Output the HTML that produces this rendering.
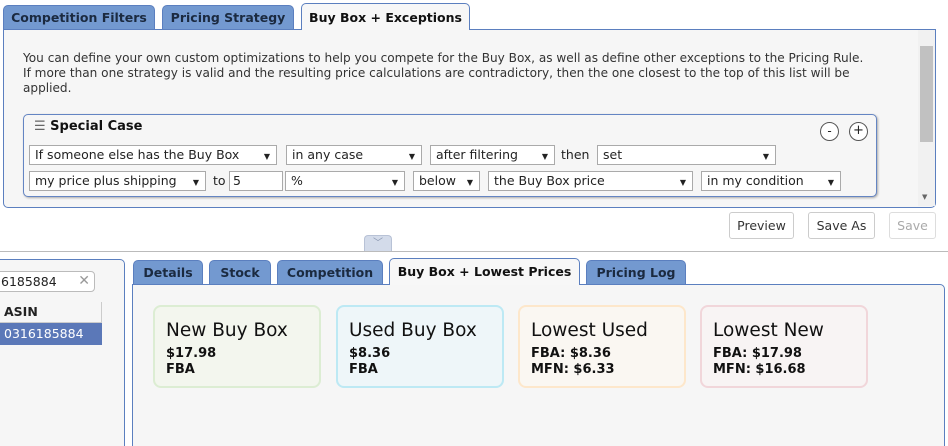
<!DOCTYPE html>
<html style="overflow:hidden;height:446px"><head><style>
*{box-sizing:border-box;margin:0;padding:0}
body{width:948px;height:446px;overflow:hidden;background:#fff;font-family:"DejaVu Sans","Liberation Sans",sans-serif;font-size:12px;color:#222;position:relative}
.a{position:absolute}
.tab{position:absolute;background:#7399d0;border:1px solid #5b7fbf;border-bottom:none;border-radius:5px 5px 0 0;font-weight:bold;font-size:12.5px;color:#1b2a40;text-align:center}
.tab.act{background:#f7f7f7;color:#111}
.sel{position:absolute;height:20px;border:1px solid #aaa;background:#fff;font-size:12.5px;padding:1px 5px;line-height:16px;color:#222}
.sel:after{content:"▼";position:absolute;right:6px;top:3px;font-size:8px}
.sel.n:after{content:""}
.btn{position:absolute;height:27px;border:1px solid #ccc;border-radius:3px;background:#fff;font-size:12.5px;text-align:center;line-height:25px;color:#333}
.card{position:absolute;top:305px;width:168px;height:83px;border:2px solid;border-radius:8px;padding:11px 11px}
.card .t{font-size:18.5px;color:#111;line-height:26px}
.card .v{font-weight:bold;font-size:13px;line-height:16px;color:#111;margin-top:2px}
</style></head><body>
<div class="tab" style="left:3px;top:5px;width:152px;height:24px;line-height:24px">Competition Filters</div>
<div class="tab" style="left:162px;top:5px;width:132px;height:24px;line-height:24px">Pricing Strategy</div>
<div class="a" style="left:3px;top:29px;width:933px;height:179px;border:1px solid #5b7fbf;border-radius:0 0 5px 5px;background:#f6f6f6"></div>
<div class="tab act" style="left:301px;top:3px;width:169px;height:27px;line-height:27px;z-index:2">Buy Box + Exceptions</div>
<div class="a" style="left:918px;top:30px;width:17px;height:176px;background:#f1f1f1"></div>
<div class="a" style="left:920px;top:46px;width:13px;height:96px;background:#c1c1c1"></div>
<div class="a" style="left:922px;top:193px;font-size:7px;color:#666">▼</div>
<div class="a" style="left:23px;top:51px;width:890px;line-height:15px;color:#333;font-size:12.1px">You can define your own custom optimizations to help you compete for the Buy Box, as well as define other exceptions to the Pricing Rule.<br>If more than one strategy is valid and the resulting price calculations are contradictory, then the one closest to the top of this list will be<br>applied.</div>
<div class="a" style="left:23px;top:114px;width:854px;height:83px;border:1px solid #6485c3;border-radius:5px;box-shadow:1px 1px 2px #aaa;background:#f6f6f6"></div>
<div class="a" style="left:34px;top:119px;font-size:13px;font-weight:bold;color:#111"><span style="font-weight:normal;color:#666">☰</span> Special Case</div>
<div class="a" style="left:820px;top:122px;width:19px;height:19px;border:1px solid #555;border-radius:50%;text-align:center;line-height:16px;font-size:12px;background:#fff">-</div>
<div class="a" style="left:849px;top:122px;width:19px;height:19px;border:1px solid #555;border-radius:50%;text-align:center;line-height:16px;font-size:13px;background:#fff">+</div>
<div class="sel" style="left:29px;top:145px;width:248px">If someone else has the Buy Box</div>
<div class="sel" style="left:286px;top:145px;width:136px">in any case</div>
<div class="sel" style="left:430px;top:145px;width:125px">after filtering</div>
<div class="a" style="left:561px;top:147px;font-size:12.5px">then</div>
<div class="sel" style="left:597px;top:145px;width:179px">set</div>
<div class="sel" style="left:29px;top:171px;width:177px">my price plus shipping</div>
<div class="a" style="left:213px;top:173px;font-size:12.5px">to</div>
<div class="sel n" style="left:229px;top:171px;width:54px;padding-left:3px">5</div>
<div class="sel" style="left:285px;top:171px;width:120px">%</div>
<div class="sel" style="left:413px;top:171px;width:67px">below</div>
<div class="sel" style="left:488px;top:171px;width:205px">the Buy Box price</div>
<div class="sel" style="left:701px;top:171px;width:140px">in my condition</div>
<div class="btn" style="left:729px;top:212px;width:65px">Preview</div>
<div class="btn" style="left:808px;top:212px;width:67px">Save As</div>
<div class="btn" style="left:889px;top:212px;width:47px;color:#aaa;border-color:#ddd">Save</div>
<div class="a" style="left:0;top:251px;width:948px;height:1px;background:#bbb"></div>
<div class="a" style="left:364px;top:235px;width:28px;height:16px;background:#d3dbea;border:1px solid #b8c2d6;border-bottom:none;border-radius:4px 4px 0 0;text-align:center;color:#8a97b0;font-size:10px;line-height:15px">﹀</div>
<div class="a" style="left:-10px;top:259px;width:135px;height:200px;border:1px solid #5b7fbf;border-radius:5px;background:#f6f6f6"></div>
<div class="a" style="left:-5px;top:271px;width:100px;height:21px;border:1px solid #bbb;border-radius:4px;background:#fff;padding-left:5px;font-size:12.5px;line-height:19px">6185884<span style="position:absolute;right:4px;color:#999;font-size:14px">✕</span></div>
<div class="a" style="left:0;top:302px;width:102px;height:21px;border-right:1px solid #ccc;border-bottom:1px solid #ccc;font-weight:bold;font-size:12.5px;padding:2px 4px;background:#f6f6f6">ASIN</div>
<div class="a" style="left:0;top:323px;width:102px;height:22px;background:#5b78b8;color:#fff;font-size:12.5px;padding:3px 4px">0316185884</div>
<div class="a" style="left:132px;top:284px;width:813px;height:170px;border:1px solid #5b7fbf;border-radius:0 5px 0 0;background:#f6f6f6"></div>
<div class="tab" style="left:133px;top:260px;width:70px;height:24px;line-height:24px">Details</div>
<div class="tab" style="left:209px;top:260px;width:62px;height:24px;line-height:24px">Stock</div>
<div class="tab" style="left:277px;top:260px;width:106px;height:24px;line-height:24px">Competition</div>
<div class="tab act" style="left:389px;top:258px;width:191px;height:27px;line-height:25px">Buy Box + Lowest Prices</div>
<div class="tab" style="left:586px;top:260px;width:100px;height:24px;line-height:24px">Pricing Log</div>
<div class="card" style="left:153px;border-color:#dcedd3;background:#f3f6ee"><div class="t">New Buy Box</div><div class="v">$17.98<br>FBA</div></div>
<div class="card" style="left:336px;border-color:#bde9f4;background:#eef6f9"><div class="t">Used Buy Box</div><div class="v">$8.36<br>FBA</div></div>
<div class="card" style="left:518px;border-color:#fde7cb;background:#faf7f2"><div class="t">Lowest Used</div><div class="v">FBA: $8.36<br>MFN: $6.33</div></div>
<div class="card" style="left:700px;border-color:#f1d6da;background:#f8f4f4"><div class="t">Lowest New</div><div class="v">FBA: $17.98<br>MFN: $16.68</div></div>
</body></html>
